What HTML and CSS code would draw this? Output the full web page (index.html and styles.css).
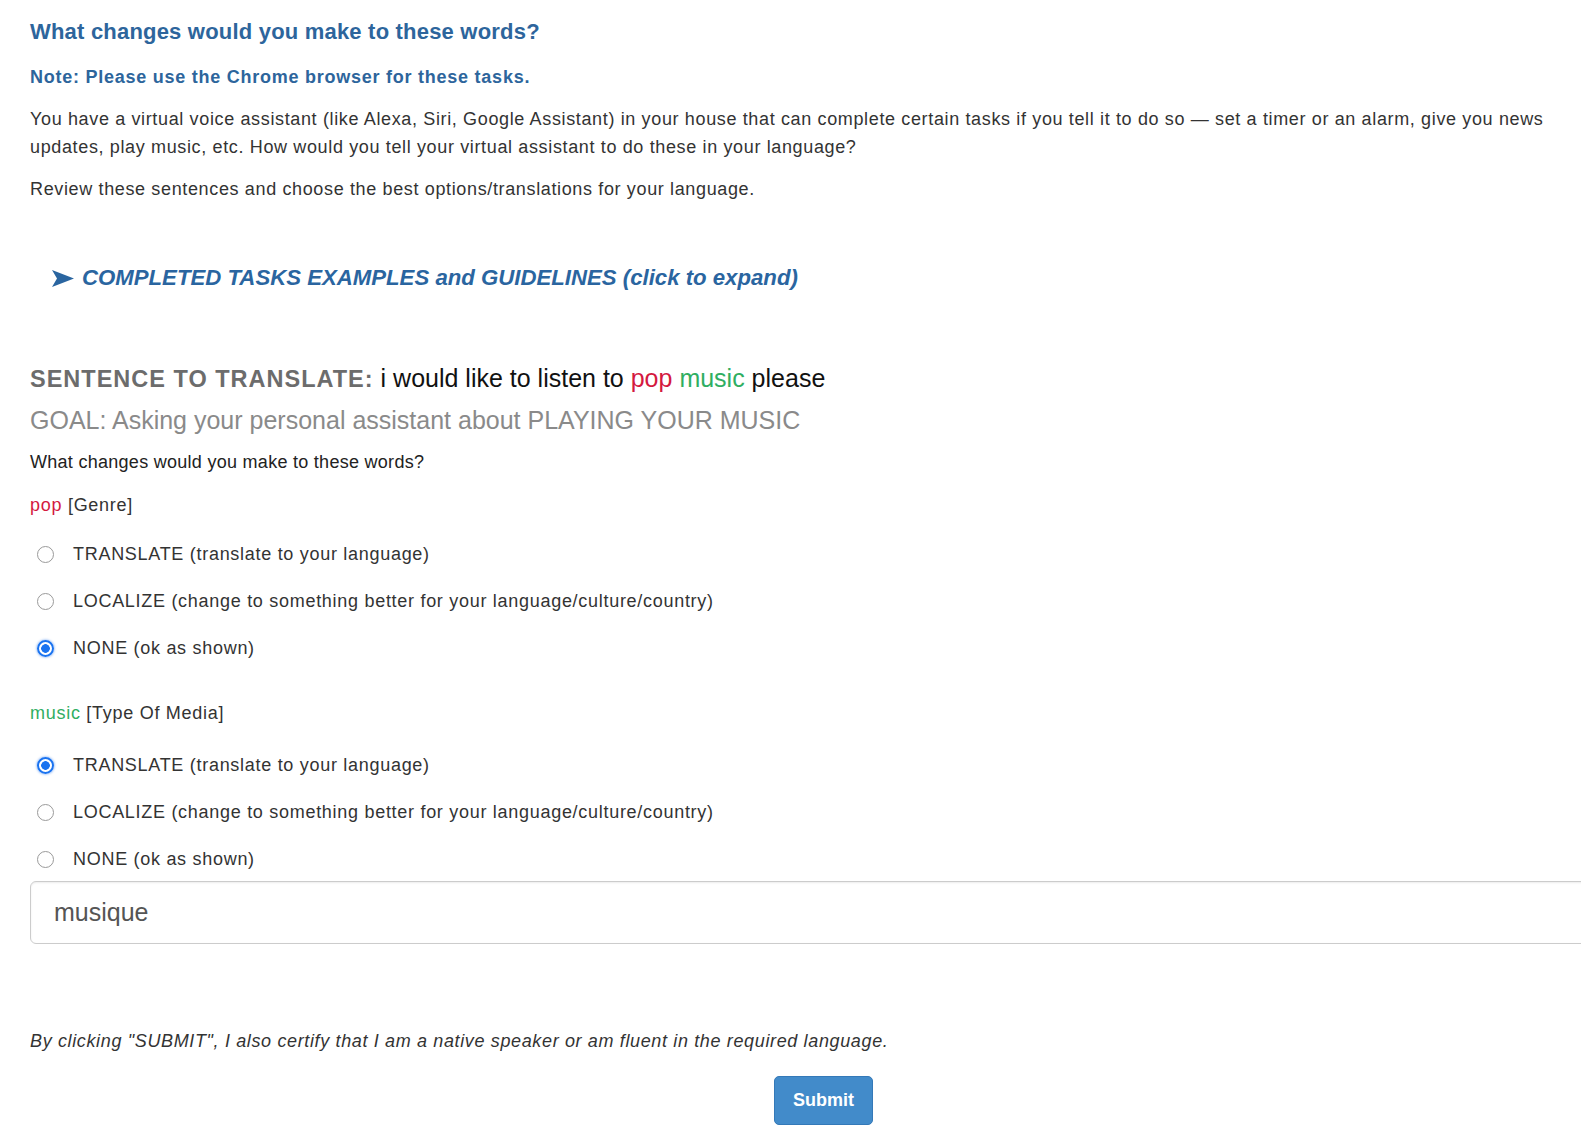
FILE: index.html
```html
<!DOCTYPE html>
<html lang="en">
<head>
<meta charset="utf-8">
<title>What changes would you make to these words?</title>
<link rel="stylesheet" href="styles.css">
</head>
<body>
<main class="task">
  <h1 class="title">What changes would you make to these words?</h1>
  <p class="note">Note: Please use the Chrome browser for these tasks.</p>
  <p class="text intro">You have a virtual voice assistant (like Alexa, Siri, Google Assistant) in your house that can complete certain tasks if you tell it to do so — set a timer or an alarm, give you news updates, play music, etc. How would you tell your virtual assistant to do these in your language?</p>
  <p class="text review">Review these sentences and choose the best options/translations for your language.</p>

  <div class="guidelines">
    <svg class="arrow" width="22" height="17" viewBox="0 0 22 17" aria-hidden="true"><path d="M0 0 L22 8.5 L0 17 L5 8.5 Z" fill="#2a65a0"/></svg>
    <span class="guidelines-text">COMPLETED TASKS EXAMPLES and GUIDELINES (click to expand)</span>
  </div>

  <div class="sentence"><span class="sentence-label">SENTENCE TO TRANSLATE:</span> i would like to listen to <span class="pop">pop</span> <span class="music">music</span> please</div>
  <div class="goal">GOAL: Asking your personal assistant about PLAYING YOUR MUSIC</div>
  <div class="question">What changes would you make to these words?</div>

  <div class="slot">
    <div class="slot-label"><span class="pop">pop</span> [Genre]</div>
    <div class="options">
      <label class="option"><input type="radio" name="pop"><span>TRANSLATE (translate to your language)</span></label>
      <label class="option"><input type="radio" name="pop"><span>LOCALIZE (change to something better for your language/culture/country)</span></label>
      <label class="option"><input type="radio" name="pop" checked><span>NONE (ok as shown)</span></label>
    </div>
  </div>

  <div class="slot slot-second">
    <div class="slot-label"><span class="music">music</span> [Type Of Media]</div>
    <div class="options">
      <label class="option"><input type="radio" name="music" checked><span>TRANSLATE (translate to your language)</span></label>
      <label class="option"><input type="radio" name="music"><span>LOCALIZE (change to something better for your language/culture/country)</span></label>
      <label class="option"><input type="radio" name="music"><span>NONE (ok as shown)</span></label>
    </div>
    <input class="answer" type="text" value="musique">
  </div>

  <p class="certify">By clicking "SUBMIT", I also certify that I am a native speaker or am fluent in the required language.</p>
  <div class="actions"><button class="submit" type="button">Submit</button></div>
</main>
</body>
</html>
```

FILE: styles.css
```css
html {
  overflow: hidden;
}
body {
  margin: 0;
  background: #ffffff;
  font-family: "Liberation Sans", Arial, sans-serif;
  color: #333333;
}
.task {
  width: 1587px;
  margin-left: 30px;
  padding-top: 17px;
}
.title {
  margin: 0;
  font-size: 22px;
  line-height: 30px;
  font-weight: bold;
  letter-spacing: 0.2px;
  color: #2d659c;
}
.note {
  margin: 16px 0 0;
  font-size: 18px;
  line-height: 28px;
  font-weight: bold;
  letter-spacing: 0.75px;
  color: #2d659c;
}
.text {
  margin: 0;
  font-size: 18px;
  line-height: 28px;
  letter-spacing: 0.64px;
  color: #333333;
  max-width: 1560px;
}
.intro {
  margin-top: 14px;
}
.review {
  margin-top: 14px;
}
.guidelines {
  display: flex;
  align-items: center;
  gap: 8px;
  margin-top: 60px;
  padding-left: 22px;
  height: 30px;
}
.arrow {
  flex: none;
}
.guidelines-text {
  font-size: 22.2px;
  line-height: 30px;
  font-weight: bold;
  font-style: italic;
  color: #2a65a0;
}
.sentence {
  margin-top: 68px;
  font-size: 25px;
  line-height: 34px;
  color: #111111;
}
.sentence-label {
  font-size: 23.5px;
  font-weight: bold;
  letter-spacing: 1px;
  color: #6c6c6c;
}
.pop {
  color: #d4193f;
}
.music {
  color: #2fae62;
}
.goal {
  margin-top: 7px;
  font-size: 25px;
  line-height: 34px;
  color: #8a8a8a;
}
.question {
  margin-top: 11px;
  font-size: 18px;
  line-height: 28px;
  letter-spacing: 0.28px;
  color: #222222;
}
.slot {
  margin-top: 15px;
}
.slot-second {
  margin-top: 37px;
}
.slot-label {
  font-size: 18px;
  line-height: 28px;
  letter-spacing: 0.72px;
  color: #333333;
}
.options {
  display: flex;
  flex-direction: column;
  gap: 19px;
  margin-top: 21px;
}
.slot-second .options {
  margin-top: 24px;
}
.option {
  display: flex;
  align-items: center;
  gap: 19px;
  height: 28px;
  padding-left: 7px;
  font-size: 18px;
  letter-spacing: 0.71px;
  color: #333333;
}
.option input {
  appearance: none;
  -webkit-appearance: none;
  margin: 0;
  width: 17px;
  height: 17px;
  border: 1.5px solid #9a9a9a;
  border-radius: 50%;
  background: #ffffff;
  flex: none;
}
.option input:checked {
  border: 2px solid #1a73f0;
  background: radial-gradient(circle, #1a73f0 0 4px, #ffffff 4.6px);
  box-shadow: 0 0 2px 1px rgba(90, 150, 240, 0.45);
}
.answer {
  display: block;
  box-sizing: border-box;
  width: 100%;
  height: 63px;
  margin-top: 8px;
  padding: 0 23px;
  border: 1px solid #cccccc;
  border-radius: 6px;
  box-shadow: inset 0 1px 2px rgba(0, 0, 0, 0.08);
  font-family: "Liberation Sans", Arial, sans-serif;
  font-size: 25px;
  color: #555555;
  background: #ffffff;
  outline: none;
}
.certify {
  margin: 83px 0 0;
  font-size: 18px;
  line-height: 28px;
  font-style: italic;
  letter-spacing: 0.64px;
  color: #333333;
}
.actions {
  display: flex;
  justify-content: center;
  margin-top: 21px;
}
.submit {
  width: 99px;
  height: 49px;
  border: 1px solid #3479b8;
  border-radius: 5px;
  background: #428bca;
  color: #ffffff;
  font-family: "Liberation Sans", Arial, sans-serif;
  font-size: 18px;
  font-weight: bold;
  cursor: pointer;
}
```
